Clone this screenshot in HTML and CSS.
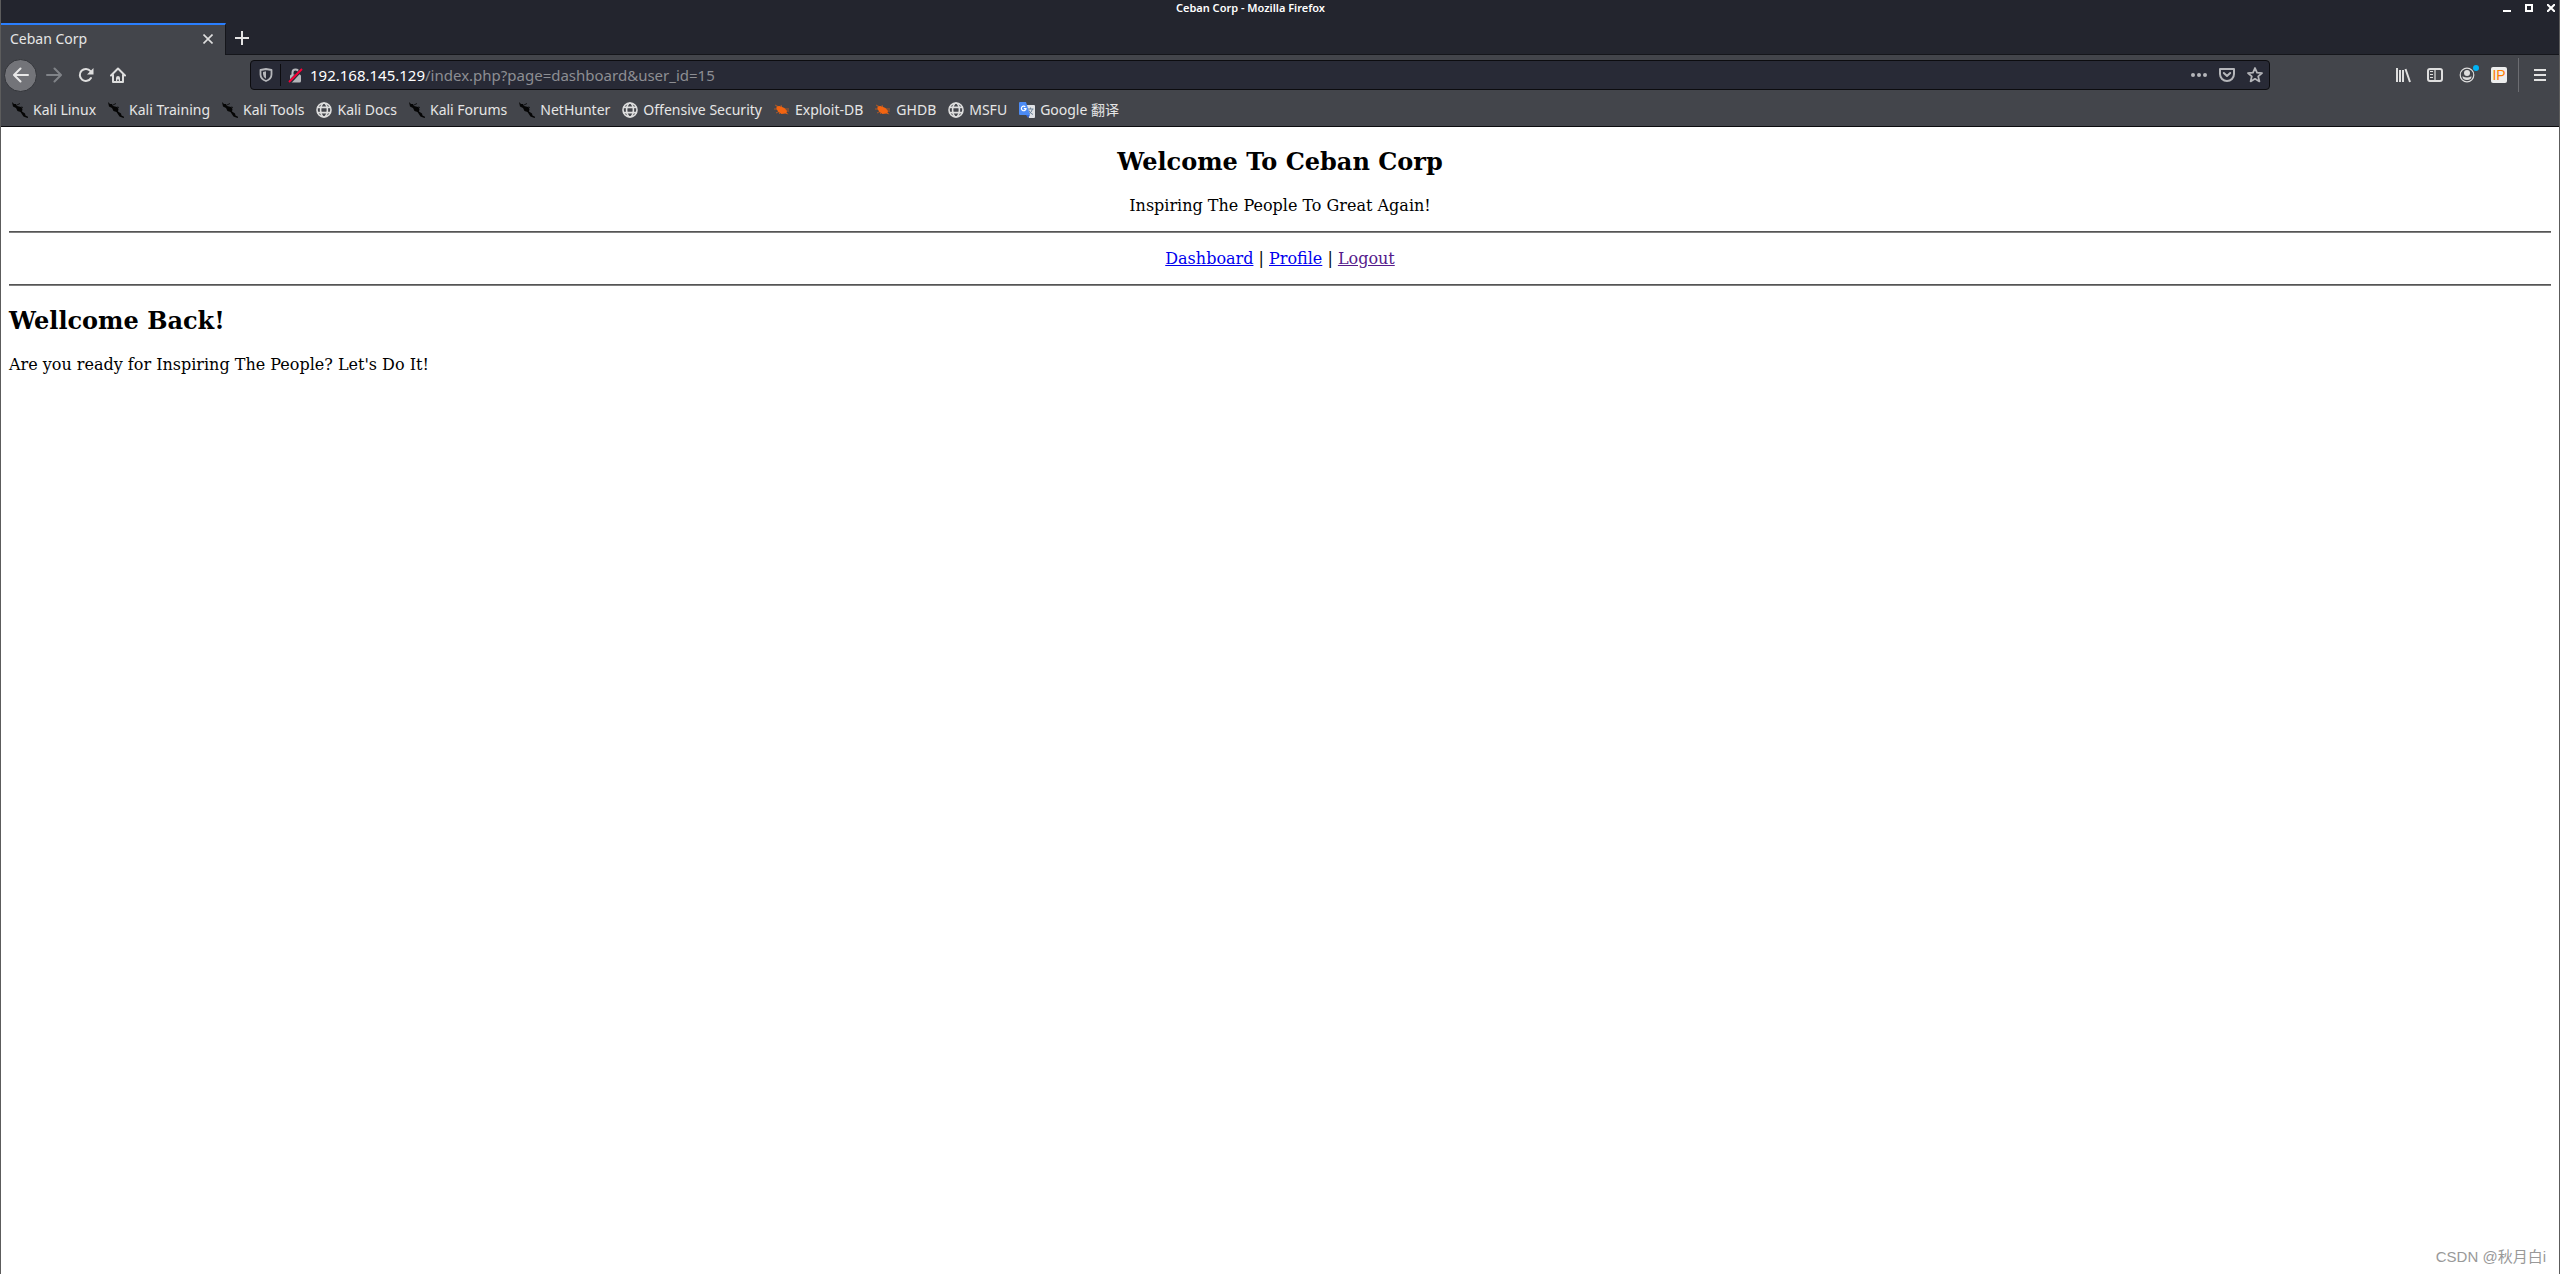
FILE: index.html
```html
<!DOCTYPE html>
<html lang="en">
<head>
<meta charset="utf-8">
<title>Ceban Corp</title>
<link rel="stylesheet" href="styles.css">
</head>
<body>
<svg class="defs" aria-hidden="true">
  <symbol id="kali" viewBox="0 0 16 16"><path fill="#050505" d="M0 0l2 2 2 0 1 2 4 1 1.500 2-.5 2.500 3 2 .5 2 3 1.500-1 1-4-1.500-3-4.500-3-1-1.500-3L1 4.500z"/><path stroke="#050505" stroke-width=".8" fill="none" d="M5 3l3-1.500M9 5l2 .5"/></symbol>
  <symbol id="globe" viewBox="0 0 16 16"><g fill="none" stroke="#dedede" stroke-width="1.6"><circle cx="8" cy="8" r="7"/><ellipse cx="8" cy="8" rx="3.4" ry="7"/><path d="M1.5 5.4h13M1.5 10.6h13"/></g></symbol>
  <symbol id="bug" viewBox="0 0 16 16"><path fill="#f26411" d="M2.500 4.500l3-.5 5 2 2.500 3-.5 1.500 2 2-3-1-4 .5-3-2-2-3z"/><path stroke="#f26411" stroke-width=".6" fill="none" d="M1 3l4 2M0 7h4M2 11l4-2M7 3l1 3M11 7l4 0M11 9l4 0M5 12l2-2"/></symbol>
</svg>
<div class="window">
  <header class="titlebar">
    <div class="caption">Ceban Corp - Mozilla Firefox</div>
    <div class="controls">
      <button aria-label="Minimize"><svg width="8" height="8"><path fill="#fff" d="M0 6h8v2H0z"/></svg></button>
      <button aria-label="Maximize"><svg width="8" height="8"><path fill="none" stroke="#fff" stroke-width="2" d="M1 1h6v6H1z"/></svg></button>
      <button aria-label="Close"><svg width="8" height="8"><path stroke="#fff" stroke-width="2" d="M0 0l8 8M8 0L0 8"/></svg></button>
    </div>
  </header>
  <div class="tabs">
    <div class="tab"><span>Ceban Corp</span><button aria-label="Close tab"><svg width="10" height="10"><path stroke="#dedede" stroke-width="1.6" d="M.5.5l9 9M9.5.5l-9 9"/></svg></button></div>
    <button class="newtab" aria-label="New tab"><svg width="14" height="14"><path stroke="#e4e4e4" stroke-width="2" d="M7 0v14M0 7h14"/></svg></button>
  </div>
  <nav class="toolbar" aria-label="Navigation">
    <button class="back" aria-label="Back"><svg width="16" height="16"><path fill="none" stroke="#e8e8e8" stroke-width="2" stroke-linecap="round" stroke-linejoin="round" d="M15 8H1.5M7.500 1.500L1 8l6.500 6.500"/></svg></button>
    <div class="tools">
      <button aria-label="Forward"><svg width="16" height="16"><path fill="none" stroke="#808388" stroke-width="2" stroke-linecap="round" stroke-linejoin="round" d="M1 8h13.500M8.500 1.500L15 8l-6.500 6.500"/></svg></button>
      <button aria-label="Reload"><svg width="16" height="16"><path fill="none" stroke="#dedede" stroke-width="2" stroke-linecap="round" d="M12.500 4.200A6 6 0 1 0 13 11"/><path fill="#dedede" d="M15.500 1v6.500H9z"/></svg></button>
      <button aria-label="Home"><svg width="16" height="16"><path fill="none" stroke="#dedede" stroke-width="2" stroke-linecap="round" stroke-linejoin="round" d="M1 8.500L8 1.500l7 7M3 8v7h10V8"/><path fill="#dedede" d="M6 15v-4q0-2 2-2t2 2v4H8.800v-2.500H7.200V15z"/></svg></button>
    </div>
    <div class="urlbar">
      <svg width="14" height="14" viewBox="0 0 14 14"><path fill="none" stroke="#b5b6ba" stroke-width="1.800" stroke-linejoin="round" d="M7 1l5.500 1v4.500Q12.500 11 7 13 1.500 11 1.500 6.500V2z"/><path fill="#b5b6ba" d="M7 3.300v7.400Q4 9 4 6V4z"/></svg>
      <span class="divider"></span>
      <svg width="15" height="15" viewBox="0 0 15 15"><path fill="none" stroke="#b5b6ba" stroke-width="2" d="M4.500 7V4.500a3 3 0 0 1 6 0V7"/><rect x="2" y="6.500" width="11" height="8" rx="1.500" fill="#b5b6ba"/><path stroke="#292b36" stroke-width="3.500" d="M1 15L14 1"/><path stroke="#ff0039" stroke-width="1.800" d="M1 14L14 1"/></svg>
      <a class="url" href="#"><b>192.168.145.129</b>/index.php?page=dashboard&amp;user_id=15</a>
      <button aria-label="Page actions"><svg width="16" height="16"><g fill="#b5b6ba"><circle cx="2" cy="8" r="2"/><circle cx="8" cy="8" r="2"/><circle cx="14" cy="8" r="2"/></g></svg></button>
      <button class="pocket" aria-label="Save to Pocket"><svg width="16" height="16"><path fill="none" stroke="#b5b6ba" stroke-width="2" stroke-linejoin="round" stroke-linecap="round" d="M1 2h14v5A7 7 0 0 1 1 7zM4.800 6L8 9l3.200-3"/></svg></button>
      <button aria-label="Bookmark this page"><svg width="16" height="16"><path fill="none" stroke="#b5b6ba" stroke-width="1.800" stroke-linejoin="round" d="M8 1l2 4.600 5 .5-3.800 3.300 1.200 5L8 11.800l-4.400 2.600 1.200-5L1 6.100l5-.5z"/></svg></button>
    </div>
    <div class="tools end">
      <button aria-label="Library"><svg width="16" height="16"><path stroke="#dedede" stroke-width="2" d="M2 1v14M5 3v12M8 3v12M10.500 2l4.500 13"/></svg></button>
      <button aria-label="Sidebars"><svg width="16" height="16"><rect x="1" y="2" width="14" height="12" rx="2" fill="none" stroke="#dedede" stroke-width="2"/><path stroke="#dedede" d="M8 2v12M3 4.500h3M3 7.500h3M3 10.500h3" stroke-width="1.200"/></svg></button>
      <button class="account" aria-label="Account"><svg width="16" height="16"><circle cx="8" cy="8" r="6.800" fill="none" stroke="#dedede" stroke-width="1.200"/><circle cx="8" cy="6" r="3" fill="#dedede"/><path fill="#dedede" d="M3.500 9.200q4.500 2.500 9 0Q12.500 13 8 13T3.500 9.200z"/></svg></button>
      <button class="ip" aria-label="IP extension">IP</button>
    </div>
    <button class="menu" aria-label="Menu"><svg width="12" height="12"><path stroke="#e2e2e2" stroke-width="2" d="M0 1h12M0 6h12M0 11h12"/></svg></button>
  </nav>
  <nav class="bookmarks" aria-label="Bookmarks">
    <a href="#"><svg><use href="#kali"/></svg>Kali Linux</a>
    <a href="#"><svg><use href="#kali"/></svg>Kali Training</a>
    <a href="#"><svg><use href="#kali"/></svg>Kali Tools</a>
    <a href="#"><svg><use href="#globe"/></svg>Kali Docs</a>
    <a href="#"><svg><use href="#kali"/></svg>Kali Forums</a>
    <a href="#"><svg><use href="#kali"/></svg>NetHunter</a>
    <a href="#"><svg><use href="#globe"/></svg>Offensive Security</a>
    <a href="#"><svg><use href="#bug"/></svg>Exploit-DB</a>
    <a href="#"><svg><use href="#bug"/></svg>GHDB</a>
    <a href="#"><svg><use href="#globe"/></svg>MSFU</a>
    <a href="#"><svg viewBox="0 0 16 16"><path fill="#dfe1e5" d="M6 3h9q1 0 1 1v11q0 1-1 1h-5z"/><path stroke="#6d8296" fill="none" d="M8.500 7h6M11.500 5.500V7M13.500 7q-1 4-4 5M10 8.500q1 3 4 4"/><path fill="#3367d6" d="M7 13h4l-2 3z"/><path fill="#4c8bf5" d="M1 0h6l4 13H1q-1 0-1-1V1q0-1 1-1z"/><path stroke="#fff" fill="none" stroke-width="1.200" d="M6.300 4.800A2.300 2.300 0 1 0 7 6.600H4.800"/></svg>Google 翻译</a>
  </nav>
  <main class="page">
    <div class="center">
      <h2>Welcome To Ceban Corp</h2>
      <p>Inspiring The People To Great Again!</p>
      <hr>
      <p><a href="#dashboard">Dashboard</a> | <a href="#profile">Profile</a> | <a class="seen" href="#logout">Logout</a></p>
      <hr>
    </div>
    <h2>Wellcome Back!</h2>
    <p>Are you ready for Inspiring The People? Let's Do It!</p>
    <div class="watermark">CSDN @秋月白i</div>
  </main>
</div>
</body>
</html>
```
FILE: styles.css
```css
* { box-sizing: border-box; }
body { margin: 0; font: 14px/20px "Noto Sans", "Noto Sans CJK SC", sans-serif; color: #e6e6e6; }
button { margin: 0; padding: 0; border: 0; background: none; font: inherit; color: inherit; display: flex; align-items: center; justify-content: center; }
svg { display: block; flex: none; }
.defs { position: absolute; width: 0; height: 0; }
.window { min-height: 100vh; display: flex; flex-direction: column; border: solid #5c5c5c; border-width: 0 1px; background: #23252e; }

.titlebar { display: flex; height: 22px; align-items: flex-start; }
.caption { flex: 1; text-align: center; font-size: 11px; line-height: 16px; font-weight: 600; color: #fff; }
.controls { display: flex; gap: 14px; padding: 4px 4px 0 0; width: 59px; justify-content: flex-end; }

.tabs { display: flex; height: 33px; border-bottom: 1px solid #15161b; }
.tab { display: flex; align-items: center; justify-content: space-between; width: 225px; height: 33px; padding: 0 12px 3px 9px; border-top: 2px solid #2a7fff; border-right: 1px solid #15161b; background: #43454b; margin-top: 1px; }
.newtab { width: 32px; }

.toolbar { display: flex; align-items: center; height: 40px; padding: 0 13px 0 3px; background: #43454b; }
.back { width: 33px; height: 33px; border-radius: 50%; border: 1px solid #33353a; background: #737479; }
.tools { display: flex; align-items: center; gap: 16px; padding-left: 9px; margin-right: 124px; }
.urlbar { flex: 1; display: flex; align-items: center; height: 30px; padding: 0 6px 0 8px; border: 1px solid #0c0c0f; border-radius: 4px; background: #282a36; }
.divider { width: 1px; height: 22px; margin: 0 7px; background: #0c0c0f; }
.url { flex: 1; margin-left: 7px; font-size: 15px; color: #8d8e93; text-decoration: none; }
.url b { font-weight: 400; color: #fff; }
.pocket { margin: 0 12px; }
.end { margin: 0 0 0 116px; }
.account { position: relative; }
.account::after { content: ""; position: absolute; right: -4px; top: -2px; width: 6px; height: 6px; border-radius: 50%; background: #00b3f4; }
.ip { width: 16px; height: 16px; border-radius: 2px; background: #eee; color: #ff7d00; font: 14px/16px "Liberation Sans", sans-serif; }
.menu { height: 34px; margin-left: 11px; padding-left: 15px; border-left: 1px solid #6c6d72; }

.bookmarks { display: flex; gap: 12px; align-items: center; height: 32px; padding: 0 11px 1px; background: #43454b; border-bottom: 1px solid #0c0c0f; }
.bookmarks a { display: flex; gap: 5px; align-items: center; color: inherit; text-decoration: none; white-space: nowrap; }
.bookmarks svg { width: 16px; height: 16px; }

.page { flex: 1; display: flow-root; position: relative; padding: 0 8px; background: #fff; color: #000; font: 16px/19px "DejaVu Serif", serif; }
.page h2 { margin: 20px 0; font-size: 24px; line-height: 29px; }
.page p { margin: 16px 0; }
.page a { color: #00e; }
.page .seen { color: #551a8b; }
.page hr { height: 2px; margin: 16px 0; border: 0; border-top: 1px solid #555; background: #808080; }
.center { text-align: center; }
.watermark { position: absolute; right: 13px; bottom: 7px; font: 15px/20px "Liberation Sans", "Noto Sans CJK SC", sans-serif; color: #999; }
```
